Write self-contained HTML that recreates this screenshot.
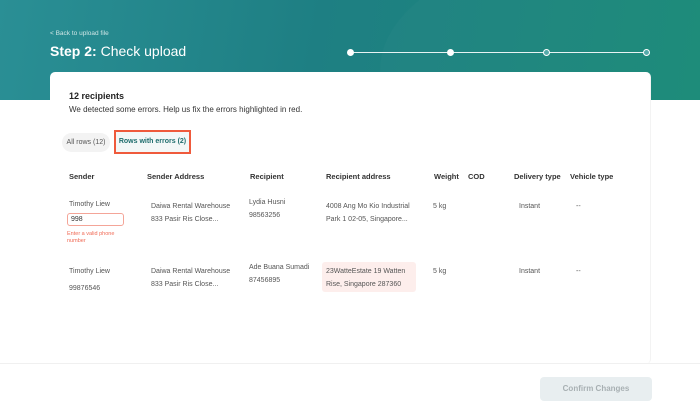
<!DOCTYPE html>
<html><head><style>
*{margin:0;padding:0;box-sizing:border-box}
body{width:700px;height:413px;background:#fff;font-family:"Liberation Sans",sans-serif;position:relative;overflow:hidden;color:#333}
.hdr{position:absolute;left:0;top:0;width:700px;height:100px;background:linear-gradient(100deg,#2a8f95 0%,#1e7f83 45%,#1a8a78 100%);overflow:hidden}
.wave{position:absolute;left:380px;top:-60px;width:500px;height:260px;border-radius:50%;background:rgba(255,255,255,.02)}
.abs{position:absolute}
.card{position:absolute;left:50px;top:72px;width:601px;height:292px;background:#fff;border-radius:5px;border-right:1px solid #f3f3f3}
.th{position:absolute;top:172px;font-size:7.5px;font-weight:bold;color:#333}
.td{position:absolute;font-size:7px;color:#555;line-height:13px}
</style></head><body>
<div class="hdr"><div class="wave"></div></div>
<div class="abs" style="left:50px;top:30px;font-size:6.5px;color:#cfe6e6">&lt; Back to upload file</div>
<div class="abs" style="left:50px;top:43px;font-size:14px;color:#fff"><b>Step 2:</b> Check upload</div>
<div class="abs" style="left:351px;top:52px;width:296px;height:1px;background:#e8f3f3"></div>
<div class="abs" style="left:347px;top:49px;width:7px;height:7px;border-radius:50%;background:#fff"></div>
<div class="abs" style="left:447px;top:49px;width:7px;height:7px;border-radius:50%;background:#fff"></div>
<div class="abs" style="left:543px;top:49px;width:7px;height:7px;border-radius:50%;border:1px solid #fff;background:#5aa"></div>
<div class="abs" style="left:643px;top:49px;width:7px;height:7px;border-radius:50%;border:1px solid #fff;background:#5aa"></div>
<div class="card"></div>
<div class="abs" style="left:69px;top:91px;font-size:9px;font-weight:bold;color:#222">12 recipients</div>
<div class="abs" style="left:69px;top:105px;font-size:8px;color:#333">We detected some errors. Help us fix the errors highlighted in red.</div>
<div class="abs" style="left:62px;top:133px;width:48px;height:19px;border-radius:10px;background:#f3f3f3;font-size:7px;color:#555;text-align:center;line-height:19px">All rows (12)</div>
<div class="abs" style="left:114px;top:130px;width:77px;height:24px;border:2px solid #ef5a3c;background:#f3f7f7;font-size:7px;font-weight:bold;color:#1e6d6d;text-align:center;line-height:20px">Rows with errors (2)</div>
<div class="th" style="left:69px">Sender</div>
<div class="th" style="left:147px">Sender Address</div>
<div class="th" style="left:250px">Recipient</div>
<div class="th" style="left:326px">Recipient address</div>
<div class="th" style="left:434px">Weight</div>
<div class="th" style="left:468px">COD</div>
<div class="th" style="left:514px">Delivery type</div>
<div class="th" style="left:570px">Vehicle type</div>
<div class="td" style="left:69px;top:198px">Timothy Liew</div>
<div class="abs" style="left:67px;top:213px;width:57px;height:13px;border:1px solid #f4a598;border-radius:3px;font-size:7px;color:#333;padding-left:3px;line-height:11px">998</div>
<div class="abs" style="left:67px;top:231px;font-size:5.5px;color:#f06a55;line-height:7px">Enter a valid phone<br>number</div>
<div class="td" style="left:151px;top:200px">Daiwa Rental Warehouse<br>833 Pasir Ris Close...</div>
<div class="td" style="left:249px;top:196px">Lydia Husni<br>98563256</div>
<div class="td" style="left:326px;top:200px">4008 Ang Mo Kio Industrial<br>Park 1 02-05, Singapore...</div>
<div class="td" style="left:433px;top:200px">5 kg</div>
<div class="td" style="left:519px;top:200px">Instant</div>
<div class="td" style="left:576px;top:200px">--</div>
<div class="td" style="left:69px;top:265px">Timothy Liew<br><span style="line-height:22px">99876546</span></div>
<div class="td" style="left:151px;top:265px">Daiwa Rental Warehouse<br>833 Pasir Ris Close...</div>
<div class="td" style="left:249px;top:261px">Ade Buana Sumadi<br>87456895</div>
<div class="abs" style="left:322px;top:262px;width:94px;height:30px;background:#fdeeec;border-radius:3px"></div>
<div class="td" style="left:326px;top:265px">23WatteEstate 19 Watten<br>Rise, Singapore 287360</div>
<div class="td" style="left:433px;top:265px">5 kg</div>
<div class="td" style="left:519px;top:265px">Instant</div>
<div class="td" style="left:576px;top:265px">--</div>
<div class="abs" style="left:0;top:363px;width:700px;height:1px;background:#f0f0f0"></div>
<div class="abs" style="left:540px;top:377px;width:112px;height:24px;border-radius:4px;background:#e8eef0;font-size:8px;font-weight:bold;color:#a8b0b3;text-align:center;line-height:24px">Confirm Changes</div>
</body></html>
